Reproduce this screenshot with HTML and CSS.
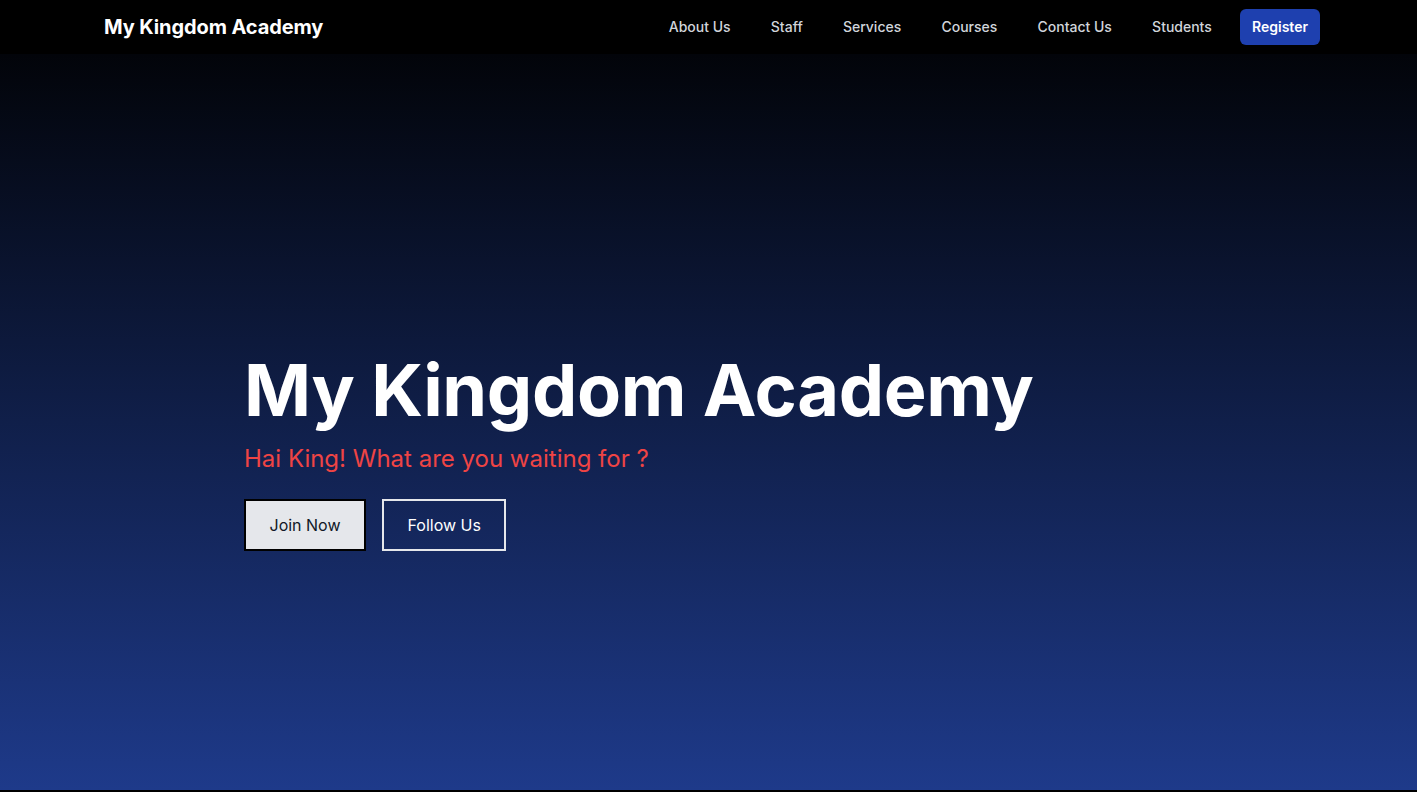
FILE: index.html
```html
<!DOCTYPE html>
<html lang="en">
<head>
<meta charset="utf-8">
<title>My Kingdom Academy</title>
<link rel="stylesheet" href="styles.css">
</head>
<body>
<div class="page">
  <header class="nav">
    <div class="nav-inner">
      <a class="logo" href="#">My Kingdom Academy</a>
      <nav class="links">
        <a href="#">About Us</a>
        <a href="#">Staff</a>
        <a href="#">Services</a>
        <a href="#">Courses</a>
        <a href="#">Contact Us</a>
        <a href="#">Students</a>
        <a class="register" href="#">Register</a>
      </nav>
    </div>
  </header>
  <section class="hero">
    <div class="hero-content">
      <h1 class="title">My Kingdom Academy</h1>
      <p class="subtitle">Hai King! What are you waiting for ?</p>
      <div class="actions">
        <a class="btn btn-light" href="#">Join Now</a>
        <a class="btn btn-outline" href="#">Follow Us</a>
      </div>
    </div>
  </section>
</div>
</body>
</html>
```
FILE: styles.css
```css
* { box-sizing: border-box; }
html, body { margin: 0; padding: 0; }
body {
  background: #000;
  font-family: Inter, "Noto Sans", sans-serif;
  color: #fff;
}
a { text-decoration: none; color: inherit; }
.page {
  height: 790px;
  background: linear-gradient(to bottom, #000 0%, #1e3a8a 100%);
  display: flex;
  flex-direction: column;
}
.nav {
  height: 54px;
  background: #000;
}
.nav-inner {
  max-width: 1223px;
  margin: 0 auto;
  height: 100%;
  display: flex;
  align-items: center;
  justify-content: space-between;
  padding-left: 7px;
}
.logo {
  font-size: 20px;
  font-weight: 700;
  color: #fff;
  letter-spacing: -0.1px;
}
.links {
  display: flex;
  align-items: center;
  gap: 16.2px;
}
.links a {
  font-size: 14px;
  font-weight: 500;
  color: #d1d5db;
  padding: 0 12px;
  line-height: 36px;
}
.links a.register {
  background: #1e40af;
  color: #fff;
  font-weight: 600;
  border-radius: 6px;
  padding: 0 12px;
}
.hero {
  flex: 1;
  display: flex;
  flex-direction: column;
  padding: 300px 0 0 244px;
}
.title {
  margin: 0;
  font-size: 72px;
  font-weight: 700;
  line-height: 1;
  color: #fff;
  letter-spacing: -0.35px;
}
.subtitle {
  margin: 17px 0 0;
  font-size: 24px;
  line-height: 32px;
  color: #ef4444;
}
.actions {
  display: flex;
  gap: 16px;
  margin-top: 24px;
}
.btn {
  display: inline-block;
  font-size: 16px;
  line-height: 24px;
  padding: 12px 23.5px;
  border: 2px solid;
}
.btn-light {
  background: #e5e7eb;
  color: #111827;
  border-color: #000;
}
.btn-outline {
  color: #fff;
  border-color: #e5e7eb;
}
```
